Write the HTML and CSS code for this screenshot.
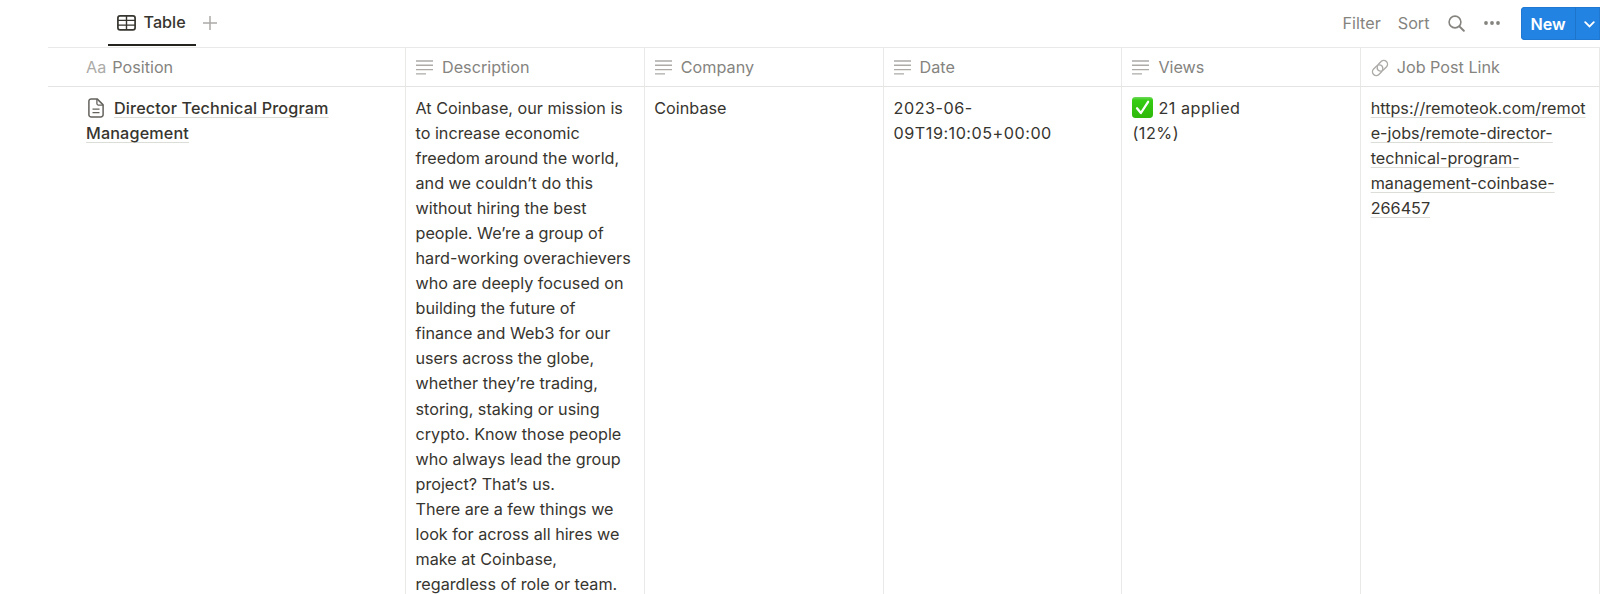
FILE: index.html
```html
<!DOCTYPE html>
<html lang="en">

<head>
    <meta charset="UTF-8">
    <meta name="viewport" content="width=device-width, initial-scale=1.0">
    <title>Remote Jobs</title>
    <link rel="stylesheet" href="styles.css">
</head>

<body>
    <svg class="sprite" width="0" height="0">
        <symbol id="icon-text" viewBox="0 0 17 15">
            <path d="M0 1h17M0 5.3h17M0 9.6h17M0 13.9h10" fill="none" stroke="currentColor" stroke-width="1.4" />
        </symbol>
    </svg>

    <div class="database">
        <div class="toolbar">
            <div class="tab">
                <svg class="tab-icon" width="19" height="16" viewBox="0 0 19 16" fill="none" stroke="currentColor">
                    <rect x=".9" y=".9" width="17.2" height="14" rx="2.2" stroke-width="1.7" />
                    <path d="M1 5.4h17M1 10.1h17M9.5 1v14" stroke-width="1.4" />
                </svg>
                <span>Table</span>
            </div>
            <svg class="add-view" width="14" height="14" viewBox="0 0 14 14" fill="none" stroke="currentColor" stroke-width="1.5">
                <path d="M7 0v14M0 7h14" />
            </svg>

            <div class="tools">
                <span class="filter">Filter</span>
                <span class="sort">Sort</span>
                <svg class="search" width="17" height="17" viewBox="0 0 17 17" fill="none" stroke="currentColor" stroke-linecap="round">
                    <circle cx="7" cy="7" r="5.9" stroke-width="1.6" />
                    <path d="M11.4 11.4l4.4 4.4" stroke-width="2" />
                </svg>
                <svg class="more" width="16" height="4" viewBox="0 0 16 4" fill="currentColor">
                    <circle cx="2" cy="2" r="1.9" />
                    <circle cx="8" cy="2" r="1.9" />
                    <circle cx="14" cy="2" r="1.9" />
                </svg>
                <div class="new-button">
                    <span class="new-label">New</span>
                    <span class="new-menu">
                        <svg width="11" height="7" viewBox="0 0 11 7" fill="none" stroke="currentColor" stroke-width="1.8" stroke-linecap="round">
                            <path d="M1.2 1.2l4.3 4.3 4.3-4.3" />
                        </svg>
                    </span>
                </div>
            </div>
        </div>

        <div class="row head">
            <div class="cell title"><span class="aa">Aa</span>Position</div>
            <div class="cell"><svg class="type-icon"><use href="#icon-text" /></svg>Description</div>
            <div class="cell"><svg class="type-icon"><use href="#icon-text" /></svg>Company</div>
            <div class="cell"><svg class="type-icon"><use href="#icon-text" /></svg>Date</div>
            <div class="cell"><svg class="type-icon"><use href="#icon-text" /></svg>Views</div>
            <div class="cell">
                <svg class="link-icon" width="18" height="18" viewBox="0 0 18 18" fill="none" stroke="currentColor" stroke-width="1.4" stroke-linecap="round">
                    <path d="M7.2 5.5l2.9-2.9a3.7 3.7 0 0 1 5.3 5.3l-3.1 3.1a3.7 3.7 0 0 1-5.3 0a3.6 3.6 0 0 1-.6-3.4" />
                    <path d="M10.8 12.5l-2.9 2.9a3.7 3.7 0 0 1-5.3-5.3l3.1-3.1a3.7 3.7 0 0 1 5.3 0a3.6 3.6 0 0 1 .6 3.4" />
                </svg>Job Post Link
            </div>
        </div>

        <div class="row">
            <div class="cell title">
                <svg class="page-icon" width="16" height="20" viewBox="0 0 16 20" fill="none" stroke="currentColor" stroke-width="1.5" stroke-linejoin="round">
                    <path d="M3.2.9h5.9l6 6v9.8a2.3 2.3 0 0 1-2.3 2.3H3.2a2.3 2.3 0 0 1-2.3-2.3V3.2A2.3 2.3 0 0 1 3.2.9z" />
                    <path d="M8.9 1v4.6a1.5 1.5 0 0 0 1.5 1.5H15M4.5 11.2h7M4.5 14.6h7" stroke-width="1.3" />
                </svg><a class="page-link">Director Technical Program Management</a>
            </div>
            <div class="cell">
                <p>At Coinbase, our mission is to increase economic freedom around the world, and we couldn’t do this without hiring the best people. We’re a group of hard-working overachievers who are deeply focused on building the future of finance and Web3 for our users across the globe, whether they’re trading, storing, staking or using crypto. Know those people who always lead the group project? That’s us.</p>
                <p>There are a few things we look for across all hires we make at Coinbase, regardless of role or team.</p>
            </div>
            <div class="cell">Coinbase</div>
            <div class="cell numeric">2023-06-<br>09T19:10:05+00:00</div>
            <div class="cell numeric">
                <svg class="check" width="21" height="21" viewBox="0 0 21 21">
                    <defs>
                        <linearGradient id="green" x1="0" y1="0" x2="0" y2="1">
                            <stop offset="0" stop-color="#6fd95b" />
                            <stop offset=".16" stop-color="#35cc12" />
                            <stop offset="1" stop-color="#2fb80a" />
                        </linearGradient>
                    </defs>
                    <rect width="21" height="21" rx="3.4" fill="url(#green)" />
                    <path d="M5 11.3l3.9 4.7 7.2-11.2" fill="none" stroke="#fff" stroke-width="2.3" stroke-linecap="round" stroke-linejoin="round" />
                </svg>21 applied<br>(12%)
            </div>
            <div class="cell"><a class="url">https://remoteok.com/remote-jobs/remote-director-technical-program-management-coinbase-266457</a></div>
        </div>
    </div>
</body>

</html>
```
FILE: styles.css
```css
* {
    margin: 0;
    padding: 0;
    box-sizing: border-box;
}

body {
    font-family: Inter, "Liberation Sans", sans-serif;
    font-size: 16.2px;
    line-height: 25.07px;
    color: #37352f;
    background: #fff;
    height: 594px;
    overflow: hidden;
}

.sprite {
    display: block;
}

.database {
    margin-left: 48px;
    height: 594px;
    display: flex;
    flex-direction: column;
}

.toolbar {
    display: flex;
    align-items: flex-start;
    height: 48px;
    flex: none;
    padding-left: 59.5px;
    border-bottom: 1px solid #e9e9e7;
}

.tab {
    display: flex;
    align-items: center;
    height: 46px;
    width: 88px;
    padding: 2px 0 0 9.5px;
    border-bottom: 2px solid #25231f;
    font-weight: 500;
}

.tab-icon {
    margin-right: 7.5px;
}

.add-view {
    margin: 16px 0 0 7.5px;
    color: #acaba8;
}

.tools {
    display: flex;
    align-items: center;
    height: 46px;
    margin-left: auto;
    color: #85847f;
}

.filter,
.sort {
    padding-top: 1px;
}

.sort {
    margin-left: 17px;
}

.search {
    margin-left: 18.5px;
}

.more {
    margin-left: 19px;
}

.new-button {
    display: flex;
    height: 33px;
    width: 79px;
    margin-left: 21px;
    color: #fff;
    background: #2383e2;
    border-radius: 4px 0 0 4px;
    box-shadow: inset 0 0 0 1px #1f78d1;
}

.new-label {
    width: 55px;
    padding-left: 9.5px;
    line-height: 35px;
    font-weight: 600;
    border-right: 1px solid #1e74c9;
}

.new-menu {
    display: flex;
    align-items: center;
    padding: 2px 0 0 7.5px;
}

.row {
    flex: 1;
    display: grid;
    grid-template-columns: 358px repeat(5, 238.8px);
}

.cell {
    padding: 8.8px 9.5px 0;
    border-right: 1px solid #e9e9e7;
    overflow-wrap: break-word;
}

.title {
    padding-left: 38px;
}

.head {
    flex: none;
    height: 39px;
    color: #85847f;
    border-bottom: 1px solid #e4e4e2;
}

.head .cell {
    display: flex;
    align-items: center;
    padding-top: 1.5px;
    white-space: nowrap;
}

.aa {
    margin-right: 6px;
    color: #acaba8;
}

.type-icon {
    width: 17px;
    height: 15px;
    margin: 0 9px 0 .5px;
    color: #acaba8;
}

.link-icon {
    margin-right: 8px;
    color: #acaba8;
}

.numeric {
    padding-left: 10px;
    letter-spacing: .5px;
}

.page-icon {
    margin: 0 10px 0 2px;
    vertical-align: -4px;
    color: #64625d;
}

.page-link {
    font-weight: 500;
    letter-spacing: .14px;
}

.page-link,
.url {
    text-decoration: underline 1px #dcdcd9;
    text-decoration-skip-ink: none;
    text-underline-offset: 3px;
}

.url {
    word-break: break-word;
}

.check {
    margin-right: 5px;
    vertical-align: -4px;
}
```
